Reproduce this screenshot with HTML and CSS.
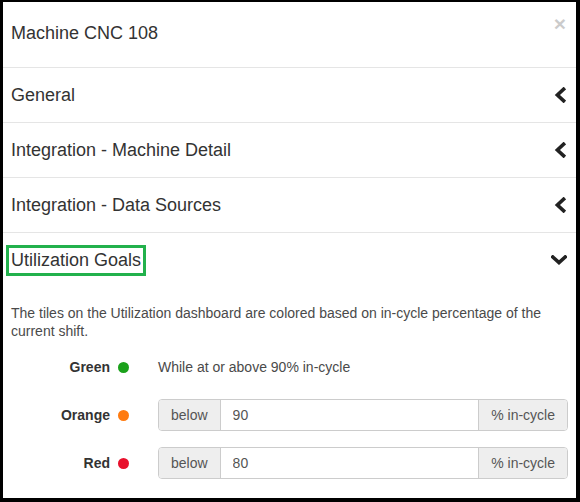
FILE: index.html
```html
<!DOCTYPE html>
<html lang="en">
<head>
	<meta charset="UTF-8">
	<title>Machine CNC 108</title>
	<link rel="stylesheet" href="styles.css">
</head>
<body>
	<div class="modal">
		<div class="modalHeader">
			<h4 class="modalTitle">Machine CNC 108</h4>
			<a href="javascript:;" class="close">&times;</a>
		</div>

		<div class="panel">
			<div class="panelHeading">
				<span class="panelTitle">General</span>
				<svg class="chevLeft" width="12" height="16" viewBox="0 0 12 16"><polyline points="9.6,2.2 3.4,8 9.6,13.8" /></svg>
			</div>
		</div>
		<div class="panel">
			<div class="panelHeading">
				<span class="panelTitle">Integration - Machine Detail</span>
				<svg class="chevLeft" width="12" height="16" viewBox="0 0 12 16"><polyline points="9.6,2.2 3.4,8 9.6,13.8" /></svg>
			</div>
		</div>
		<div class="panel">
			<div class="panelHeading">
				<span class="panelTitle">Integration - Data Sources</span>
				<svg class="chevLeft" width="12" height="16" viewBox="0 0 12 16"><polyline points="9.6,2.2 3.4,8 9.6,13.8" /></svg>
			</div>
		</div>
		<div class="panel open">
			<div class="panelHeading">
				<span class="panelTitle marked">Utilization Goals</span>
				<svg class="chevDown" width="16" height="10" viewBox="0 0 16 10"><polyline points="1.8,2 8,7.6 14.2,2" /></svg>
			</div>
			<div class="panelBody">
				<p class="desc">The tiles on the Utilization dashboard are colored based on in-cycle percentage of the current shift.</p>

				<div class="goal">
					<label class="goalLabel">Green <i class="dot green"></i></label>
					<div class="goalText">While at or above 90% in-cycle</div>
				</div>
				<div class="goal">
					<label class="goalLabel">Orange <i class="dot orange"></i></label>
					<div class="inputGroup">
						<span class="addon">below</span>
						<input type="text" class="field" value="90">
						<span class="addon">% in-cycle</span>
					</div>
				</div>
				<div class="goal">
					<label class="goalLabel">Red <i class="dot red"></i></label>
					<div class="inputGroup">
						<span class="addon">below</span>
						<input type="text" class="field" value="80">
						<span class="addon">% in-cycle</span>
					</div>
				</div>
			</div>
		</div>
	</div>
</body>
</html>
```

FILE: styles.css
```css
*{
	margin: 0;
	padding: 0;
	box-sizing: border-box;
}
body{
	font-family: "Liberation Sans", Arial, sans-serif;
	color: #333;
	background: #fff;
}
.modal{
	width: 580px;
	height: 502px;
	border-style: solid;
	border-color: #000;
	border-width: 2px 4px 4px 3px;
	overflow: hidden;
}
.modalHeader{
	height: 66px;
	border-bottom: 1px solid #e5e5e5;
	padding: 21px 9px 0 8px;
	display: flex;
	justify-content: space-between;
	align-items: flex-start;
}
.modalTitle{
	font-size: 18px;
	font-weight: normal;
	line-height: 20px;
}
.close{
	font-size: 21px;
	font-weight: bold;
	line-height: 1;
	color: #000;
	opacity: .2;
	text-decoration: none;
	margin-top: -10px;
	margin-right: 1px;
}
.panelHeading{
	height: 55px;
	border-bottom: 1px solid #e5e5e5;
	padding: 0 10px 0 8px;
	display: flex;
	justify-content: space-between;
	align-items: center;
	font-size: 18px;
}
.panel.open .panelHeading{
	border-bottom: none;
	height: 54px;
}
.panelTitle.marked{
	border: 3px solid #22b14c;
	padding: 2px 2px 3px;
	margin-left: -5px;
	line-height: 20px;
}
.chevLeft polyline,
.chevDown polyline{
	fill: none;
	stroke: #222;
	stroke-width: 3.6;
	stroke-linecap: square;
}
.chevDown{
	margin-right: -1px;
}
.panelBody{
	padding: 17px 8px 0 8px;
	font-size: 14px;
}
.desc{
	line-height: 18px;
	color: #4a4a4a;
	margin-bottom: 11px;
}
.goal{
	display: grid;
	grid-template-columns: 118px 1fr;
	column-gap: 29px;
	align-items: center;
	height: 32px;
	margin-bottom: 16px;
}
.goalLabel{
	font-weight: bold;
	display: flex;
	justify-content: flex-end;
	align-items: center;
	gap: 8px;
	color: #333;
}
.dot{
	width: 11px;
	height: 11px;
	border-radius: 50%;
	display: inline-block;
}
.dot.green{
	background-color: #1ba11b;
}
.dot.orange{
	background-color: #ff7b10;
}
.dot.red{
	background-color: #e8102c;
}
.goalText{
	color: #4a4a4a;
}
.inputGroup{
	display: flex;
	height: 32px;
	border: 1px solid #ccc;
	border-radius: 4px;
	overflow: hidden;
}
.addon{
	background-color: #eee;
	color: #555;
	padding: 0 12px;
	display: flex;
	align-items: center;
	font-size: 14px;
}
.addon:first-child{
	border-right: 1px solid #ccc;
}
.addon:last-child{
	border-left: 1px solid #ccc;
}
.field{
	flex: 1;
	border: none;
	outline: none;
	padding: 0 12px;
	font-family: inherit;
	font-size: 14px;
	color: #555;
	min-width: 0;
}
```
